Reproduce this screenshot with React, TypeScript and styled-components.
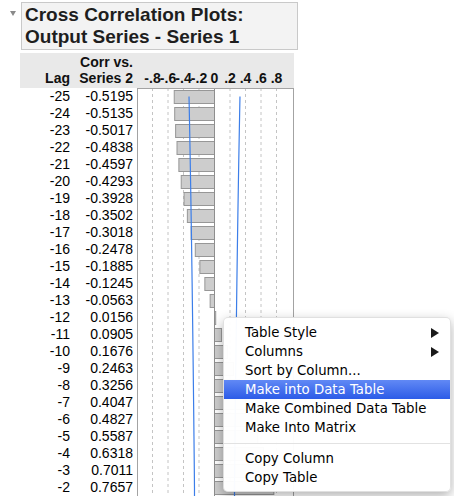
import React from 'react';
import styled, {createGlobalStyle} from 'styled-components';

const GlobalStyle = createGlobalStyle`
  html, body {
    margin: 0;
    padding: 0;
    background: #ffffff;
    overflow: hidden;
  }
  body {
    font-family: "Liberation Sans", Arial, sans-serif;
    color: #000;
  }
`

type RowType = [number, number]

const rows: RowType[] = [
    [-25, -0.5195], [-24, -0.5135], [-23, -0.5017], [-22, -0.4838],
    [-21, -0.4597], [-20, -0.4293], [-19, -0.3928], [-18, -0.3502],
    [-17, -0.3018], [-16, -0.2478], [-15, -0.1885], [-14, -0.1245],
    [-13, -0.0563], [-12, 0.0156], [-11, 0.0905], [-10, 0.1676],
    [-9, 0.2463], [-8, 0.3256], [-7, 0.4047], [-6, 0.4827],
    [-5, 0.5587], [-4, 0.6318], [-3, 0.7011], [-2, 0.7657],
]

const ROW_H = 17
const PLOT_W = 157
const ZERO = 77.5
const UNIT = 77.5
const ticks = [-0.8, -0.6, -0.4, -0.2, 0, 0.2, 0.4, 0.6, 0.8]

const xOf = (v: number) => ZERO + v * UNIT
const tickLabel = (t: number) => t === 0 ? '0' : (t < 0 ? '-' : '') + '.' + Math.round(Math.abs(t) * 10)
const limitOf = (lag: number) => 2 / Math.sqrt(62 - Math.abs(lag))

type MenuItemType = { label: string, submenu?: boolean, active?: boolean }

const menuTop: MenuItemType[] = [
    {label: 'Table Style', submenu: true},
    {label: 'Columns', submenu: true},
    {label: 'Sort by Column...'},
    {label: 'Make into Data Table', active: true},
    {label: 'Make Combined Data Table'},
    {label: 'Make Into Matrix'},
]
const menuBottom: MenuItemType[] = [
    {label: 'Copy Column'},
    {label: 'Copy Table'},
]

const AxisLabels = () => (
    <svg width={PLOT_W} height={35}>
        {ticks.map(t => (
            <AxisText key={t} x={xOf(t)} y={30} textAnchor="middle">{tickLabel(t)}</AxisText>
        ))}
    </svg>
)

const CorrPlot = () => {
    const height = rows.length * ROW_H + 2
    const band = rows.map(([lag], i) => ({y: i * ROW_H + 8.5, lim: limitOf(lag)}))
    const last = band[band.length - 1]
    const pts = (sign: number) =>
        [...band, {y: height, lim: last.lim}].map(p => `${xOf(sign * p.lim)},${p.y}`).join(' ')
    return (
        <svg width={PLOT_W} height={height}>
            {ticks.filter(t => t !== 0).map(t => (
                <line key={t} x1={xOf(t)} x2={xOf(t)} y1={0} y2={height}
                      stroke="#c4c4c4" strokeWidth={1} strokeDasharray="3 3"/>
            ))}
            {rows.map(([lag, v], i) => (
                <rect key={lag}
                      x={Math.min(xOf(v), ZERO)} y={i * ROW_H + 2.5}
                      width={Math.abs(v) * UNIT} height={13}
                      fill="#cdcdcd" stroke="#979797" strokeWidth={1}/>
            ))}
            <line x1={ZERO} x2={ZERO} y1={0} y2={height} stroke="#8e8e8e" strokeWidth={1}/>
            <polyline points={pts(-1)} fill="none" stroke="#3c7ee9" strokeWidth={1.2}/>
            <polyline points={pts(1)} fill="none" stroke="#3c7ee9" strokeWidth={1.2}/>
            <rect x={0.5} y={0.5} width={PLOT_W - 1} height={height + 4} fill="none" stroke="#a3a3a3"/>
        </svg>
    )
}

const MenuRow = ({item}: { item: MenuItemType }) => (
    <Item active={item.active}>
        <span>{item.label}</span>
        {item.submenu && <Arrow active={item.active}/>}
    </Item>
)

const App = () => {
    return (
        <Page>
            <GlobalStyle/>
            <Outline>
                <Disclosure><Triangle/></Disclosure>
                <TitleBox>
                    Cross Correlation Plots:<br/>
                    Output Series - Series 1
                </TitleBox>
            </Outline>
            <Report>
                <HeadRow>
                    <HeadCell>Lag</HeadCell>
                    <HeadCell>Corr vs.<br/>Series 2</HeadCell>
                    <AxisCell><AxisLabels/></AxisCell>
                </HeadRow>
                <Body>
                    <Column>
                        {rows.map(([lag]) => <Cell key={lag}>{lag}</Cell>)}
                    </Column>
                    <Column>
                        {rows.map(([lag, v]) => <Cell key={lag}>{v.toFixed(4)}</Cell>)}
                    </Column>
                    <PlotCell><CorrPlot/></PlotCell>
                </Body>
            </Report>
            <Menu>
                {menuTop.map(item => <MenuRow key={item.label} item={item}/>)}
                <Separator/>
                {menuBottom.map(item => <MenuRow key={item.label} item={item}/>)}
            </Menu>
        </Page>
    );
};

export default App;

const Page = styled.div`
  position: relative;
  width: 454px;
  height: 496px;
  padding-top: 2px;
  box-sizing: border-box;
`

const Outline = styled.div`
  display: flex;
  align-items: flex-start;
`

const Disclosure = styled.div`
  width: 21px;
  padding: 9px 0 0 10px;
  box-sizing: border-box;
`

const Triangle = styled.div`
  width: 0;
  height: 0;
  border-left: 3.5px solid transparent;
  border-right: 3.5px solid transparent;
  border-top: 5px solid #8a8a8a;
`

const TitleBox = styled.div`
  width: 277px;
  box-sizing: border-box;
  padding: 0.5px 3px 1px;
  background: #f3f3f3;
  border: 1px solid #c9c9c9;
  font-size: 19px;
  line-height: 22px;
  font-weight: bold;
  color: #1e1e1e;
`

const Report = styled.div`
  margin: 3px 0 0 20px;
  width: 274px;
`

const HeadRow = styled.div`
  display: grid;
  grid-template-columns: 53px 64px 157px;
  height: 35px;
  background: #e9e9e9;
`

const HeadCell = styled.div`
  display: flex;
  flex-direction: column;
  justify-content: flex-end;
  text-align: right;
  padding: 0 3px 2px 0;
  font-size: 14px;
  line-height: 16px;
  font-weight: bold;
  color: #111;
  &:nth-child(2) {
    padding-right: 4px;
  }
`

const AxisCell = styled.div`
  display: flex;
`

const AxisText = styled.text`
  font-family: "Liberation Sans", Arial, sans-serif;
  font-size: 14px;
  font-weight: bold;
  fill: #111;
`

const Body = styled.div`
  display: grid;
  grid-template-columns: 53px 64px 157px;
`

const Column = styled.div`
  display: flex;
  flex-direction: column;
  padding-right: 3px;
  &:nth-child(2) {
    padding-right: 4px;
  }
`

const Cell = styled.div`
  height: 17px;
  line-height: 17px;
  font-size: 14px;
  text-align: right;
`

const PlotCell = styled.div`
  display: flex;
`

const Menu = styled.div`
  position: absolute;
  left: 223px;
  top: 317px;
  width: 228px;
  padding: 5px 0 4px;
  box-sizing: border-box;
  background: rgba(255, 255, 255, 0.97);
  border-radius: 5px;
  border: 1px solid rgba(0, 0, 0, 0.12);
  box-shadow: 0 4px 12px rgba(0, 0, 0, 0.3);
  font-family: "DejaVu Sans", "Liberation Sans", sans-serif;
  font-size: 13.3px;
`

const Item = styled.div<{ active?: boolean }>`
  display: flex;
  align-items: center;
  justify-content: space-between;
  height: 19px;
  padding: 0 11px 0 21px;
  color: ${p => p.active ? '#ffffff' : '#000000'};
  background: ${p => p.active ? 'linear-gradient(#6189f5, #2c5be7)' : 'transparent'};
`

const Arrow = styled.div<{ active?: boolean }>`
  width: 0;
  height: 0;
  border-top: 5px solid transparent;
  border-bottom: 5px solid transparent;
  border-left: 8px solid ${p => p.active ? '#ffffff' : '#1a1a1a'};
`

const Separator = styled.div`
  height: 1px;
  margin: 6px 0 5px;
  background: #e2e2e2;
`
